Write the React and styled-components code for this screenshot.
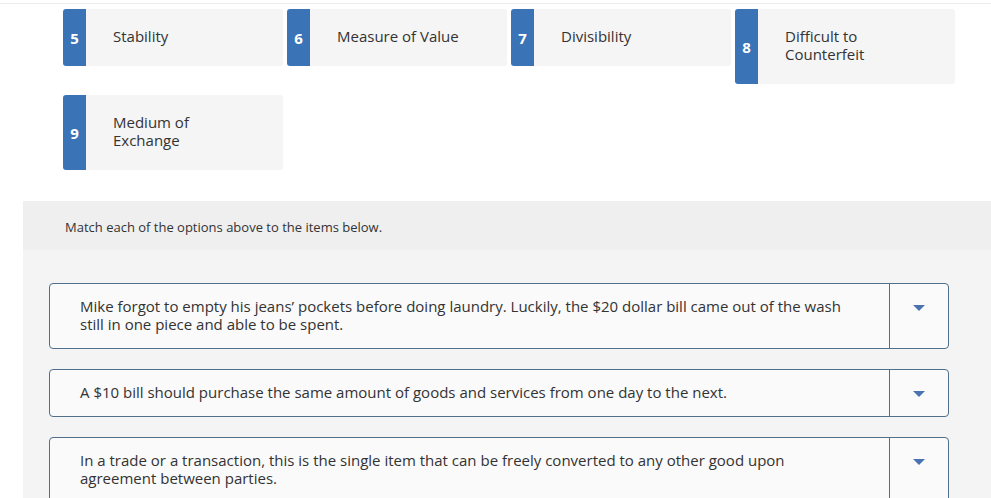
import React from "react";
import styled, { createGlobalStyle } from "styled-components";

const Global = createGlobalStyle`
  html, body { margin: 0; padding: 0; background: #ffffff; }
  body { font-family: "Open Sans", Lato, Arial, sans-serif; color: #333; overflow: hidden; }
  * { box-sizing: border-box; }
`;

const Page = styled.div`
  width: 991px;
  height: 498px;
  overflow: hidden;
  background: #fff;
`;

const TopRule = styled.div`
  height: 4px;
  border-bottom: 1px solid #ececec;
`;

const Options = styled.div`
  display: flex;
  flex-wrap: wrap;
  align-items: flex-start;
  column-gap: 4px;
  row-gap: 11px;
  width: 892px;
  margin: 5px 0 0 63px;
`;

const Card = styled.div`
  display: flex;
  width: 220px;
  background: #f5f5f5;
  border-radius: 3px;
`;

const Badge = styled.div`
  flex: 0 0 23px;
  display: flex;
  align-items: center;
  justify-content: center;
  background: #3a74b7;
  color: #fff;
  font-weight: 700;
  font-size: 15px;
  border-radius: 3px 0 0 3px;
`;

const Label = styled.div`
  padding: 18px 16px 21px 27px;
  font-size: 15px;
  line-height: 18px;
  color: #333;
  width: 175px;
`;

const Section = styled.div`
  margin: 31px 0 0 23px;
  background: #f4f4f4;
  height: 300px;
`;

const Prompt = styled.div`
  height: 49px;
  background: #efefef;
  display: flex;
  align-items: center;
  padding-left: 42px;
  font-size: 13px;
  color: #333;
  padding-top: 2px;
`;

const Items = styled.div`
  display: flex;
  flex-direction: column;
  gap: 20px;
  padding: 33px 0 0 26px;
`;

const Item = styled.div`
  display: flex;
  width: 900px;
  background: #fafafa;
  border: 1px solid #4f6f8a;
  border-radius: 4px;
`;

const ItemText = styled.div`
  flex: 1;
  padding: 13px 40px 15px 30px;
  font-size: 15px;
  line-height: 18px;
  color: #333;
`;

const Dropdown = styled.div`
  flex: 0 0 59px;
  border-left: 1px solid #4f6f8a;
  display: flex;
  justify-content: center;
  padding-top: 21px;
  padding-right: 1px;
`;

const Caret = () => (
  <svg width="12" height="6" viewBox="0 0 12 6" style={{ display: "block" }}>
    <polygon points="0,0 12,0 6,6" fill="#4a72b0" />
  </svg>
);

const options = [
  { n: 5, t: "Stability" },
  { n: 6, t: "Measure of Value" },
  { n: 7, t: "Divisibility" },
  { n: 8, t: "Difficult to Counterfeit" },
  { n: 9, t: "Medium of Exchange" },
];

const items = [
  "Mike forgot to empty his jeans’ pockets before doing laundry. Luckily, the $20 dollar bill came out of the wash still in one piece and able to be spent.",
  "A $10 bill should purchase the same amount of goods and services from one day to the next.",
  "In a trade or a transaction, this is the single item that can be freely converted to any other good upon agreement between parties.",
];

export default function App() {
  return (
    <Page>
      <Global />
      <TopRule />
      <Options>
        {options.map((o) => (
          <Card key={o.n}>
            <Badge>{o.n}</Badge>
            <Label>{o.t}</Label>
          </Card>
        ))}
      </Options>
      <Section>
        <Prompt>Match each of the options above to the items below.</Prompt>
        <Items>
          {items.map((t, i) => (
            <Item key={i}>
              <ItemText>{t}</ItemText>
              <Dropdown>
                <Caret />
              </Dropdown>
            </Item>
          ))}
        </Items>
      </Section>
    </Page>
  );
}
